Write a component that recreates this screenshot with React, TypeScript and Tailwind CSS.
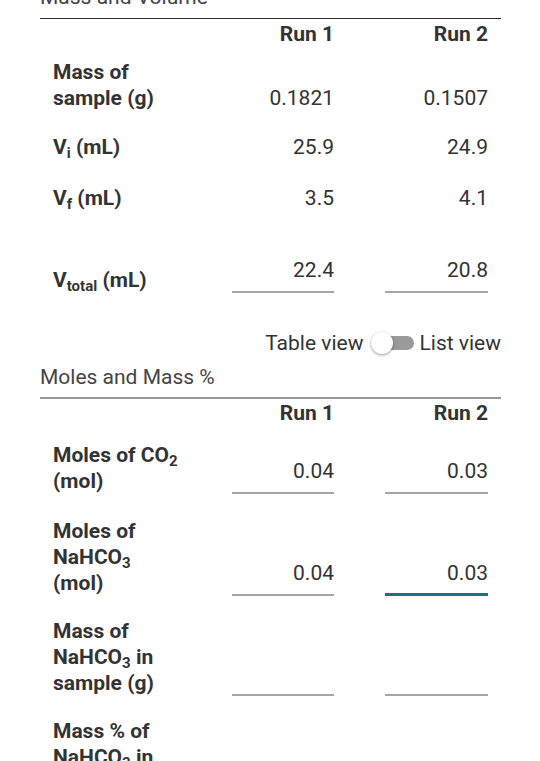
import React from 'react'

type Cell = { value: string; input?: boolean; focused?: boolean }
type Row = { label: React.ReactNode; cells: [Cell, Cell]; mt: string }

const Sub = ({ children }: { children: React.ReactNode }) => (
  <sub className="text-[15px]">{children}</sub>
)

const volumeRows: Row[] = [
  { label: <>Mass of sample (g)</>, cells: [{ value: '0.1821' }, { value: '0.1507' }], mt: 'mt-[12px]' },
  { label: <>V<Sub>i</Sub> (mL)</>, cells: [{ value: '25.9' }, { value: '24.9' }], mt: 'mt-[23px]' },
  { label: <>V<Sub>f</Sub> (mL)</>, cells: [{ value: '3.5' }, { value: '4.1' }], mt: 'mt-[25px]' },
  {
    label: <>V<Sub>total</Sub> (mL)</>,
    cells: [{ value: '22.4', input: true }, { value: '20.8', input: true }],
    mt: 'mt-[46px]',
  },
]

const moleRows: Row[] = [
  {
    label: <>Moles of CO<Sub>2</Sub> (mol)</>,
    cells: [{ value: '0.04', input: true }, { value: '0.03', input: true }],
    mt: 'mt-[16px]',
  },
  {
    label: <>Moles of NaHCO<Sub>3</Sub> (mol)</>,
    cells: [{ value: '0.04', input: true }, { value: '0.03', input: true, focused: true }],
    mt: 'mt-[24px]',
  },
  {
    label: <>Mass of NaHCO<Sub>3</Sub> in sample (g)</>,
    cells: [{ value: '', input: true }, { value: '', input: true }],
    mt: 'mt-[22px]',
  },
  {
    label: <>Mass % of NaHCO<Sub>3</Sub> in sample</>,
    cells: [{ value: '', input: true }, { value: '', input: true }],
    mt: 'mt-[22px]',
  },
]

function ValueCell({ cell, wide }: { cell: Cell; wide?: boolean }) {
  const width = wide ? 'w-[103px]' : 'w-[102px]'
  if (!cell.input) {
    return <div className={`${width} flex-none text-right leading-[26px]`}>{cell.value}</div>
  }
  return (
    <div
      className={`${width} flex-none text-right leading-[26px] ${
        cell.focused ? 'pb-[7px] border-b-[3px] border-[#23707d]' : 'pb-[8px] border-b-[2px] border-[#a6a6a6]'
      }`}
    >
      {cell.value || '\u00a0'}
    </div>
  )
}

function DataRow({ row }: { row: Row }) {
  return (
    <div className={`flex items-end ${row.mt}`}>
      <div className="w-[131px] flex-none font-bold leading-[26px]">{row.label}</div>
      <div className="flex-1" />
      <ValueCell cell={row.cells[0]} />
      <div className="w-[51px] flex-none" />
      <ValueCell cell={row.cells[1]} wide />
    </div>
  )
}

function Header({ mt }: { mt: string }) {
  return (
    <div className={`flex px-[13px] font-bold leading-[26px] ${mt}`}>
      <div className="flex-1" />
      <div className="w-[102px] text-right">Run 1</div>
      <div className="w-[51px]" />
      <div className="w-[103px] text-right">Run 2</div>
    </div>
  )
}

export default function App() {
  return (
    <div className="w-[540px] h-[761px] overflow-hidden bg-white font-['Roboto',sans-serif] text-[21px] text-[#333]">
      <div className="pl-[40px] pr-[39px] mt-[-16px]">
        {/* Mass and volume */}
        <h2 className="leading-[26px] pb-[8px] border-b-[1.5px] border-[#2a2a2a] text-[#444]">Mass and Volume</h2>
        <Header mt="mt-[2px]" />
        <div className="px-[13px]">
          {volumeRows.map((r, i) => (
            <DataRow key={i} row={r} />
          ))}
        </div>

        {/* View toggle */}
        <div className="flex items-center justify-end mt-[37px] leading-[26px]">
          <span>Table view</span>
          <div className="relative w-[52px] h-[26px] ml-[2px] flex-none">
            <div className="absolute left-[12px] top-[6px] w-[37px] h-[14px] rounded-full bg-[#9a9a9a]" />
            <div className="absolute left-[6px] top-[2px] w-[22px] h-[22px] rounded-full bg-white shadow-[0_1px_3px_rgba(0,0,0,0.4)]" />
          </div>
          <span className="ml-[2px]">List view</span>
        </div>

        {/* Moles and mass % */}
        <h2 className="mt-[8px] leading-[26px] pb-[7px] border-b-[2px] border-[#999] text-[#444]">Moles and Mass %</h2>
        <Header mt="mt-[1px]" />
        <div className="px-[13px]">
          {moleRows.map((r, i) => (
            <DataRow key={i} row={r} />
          ))}
        </div>
      </div>
    </div>
  )
}
